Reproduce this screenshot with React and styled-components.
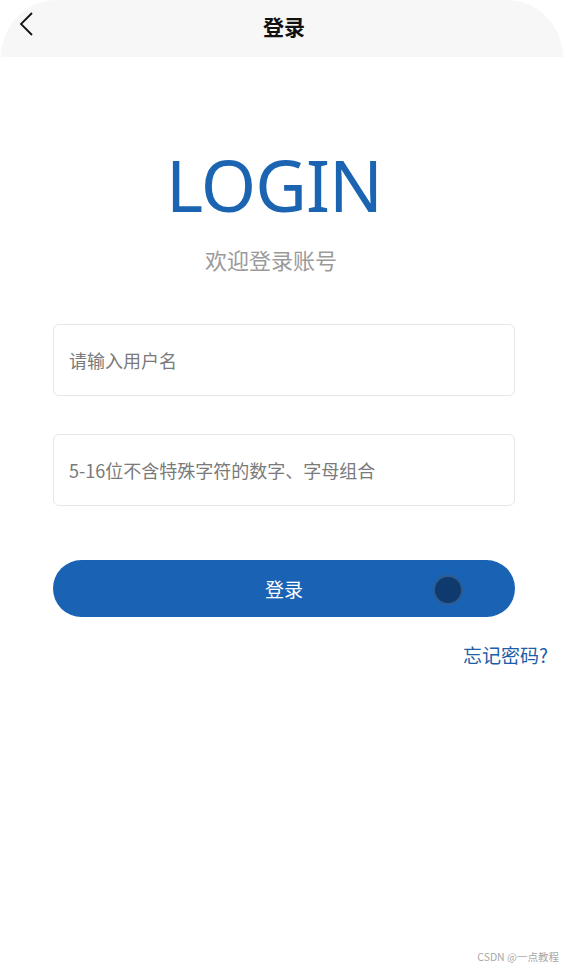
import React from 'react';
import styled, { createGlobalStyle } from 'styled-components';

const GlobalStyle = createGlobalStyle`
  html, body {
    margin: 0;
    padding: 0;
    background: #fff;
    font-family: "Noto Sans", "Noto Sans CJK SC", sans-serif;
  }
`;

const Page = styled.div`
  width: 564px;
  height: 968px;
  display: flex;
  flex-direction: column;
  background: #fff;
  overflow: hidden;
  position: relative;
`;

const Header = styled.div`
  height: 57px;
  margin: 0 1px;
  background: #f7f7f7;
  border-radius: 60px 60px 0 0;
  display: flex;
  align-items: center;
  justify-content: center;
  position: relative;
`;

const Back = styled.button`
  position: absolute;
  left: 14px;
  top: 10px;
  width: 22px;
  height: 28px;
  border: none;
  background: none;
  padding: 0;
  display: flex;
  align-items: center;
  justify-content: center;
`;

const Title = styled.h1`
  margin: 0;
  font-family: "Noto Sans CJK SC", sans-serif;
  font-size: 21px;
  font-weight: 700;
  color: #111;
  transform: translate(2px, -3px);
`;

const Hero = styled.div`
  display: flex;
  flex-direction: column;
  align-items: center;
  padding-top: 78px;
`;

const Logo = styled.div`
  font-family: "Noto Sans", sans-serif;
  font-size: 71px;
  line-height: 100px;
  letter-spacing: -1px;
  color: #1b64b1;
  transform: translateX(-8px);
`;

const Welcome = styled.div`
  margin-top: 9px;
  font-family: "Noto Sans CJK SC", sans-serif;
  font-size: 22px;
  line-height: 30px;
  color: #9a9a9a;
  transform: translateX(-11px);
`;

const Form = styled.form`
  display: flex;
  flex-direction: column;
  padding: 50px 49px 0 53px;
  gap: 38px;
`;

const Field = styled.input`
  box-sizing: border-box;
  width: 462px;
  height: 72px;
  border: 1px solid #e6e6e6;
  border-radius: 6px;
  padding: 0 15px;
  font-family: "Noto Sans CJK SC", sans-serif;
  font-size: 18px;
  color: #333;
  outline: none;
  &::placeholder {
    color: #7a7a7a;
  }
`;

const Submit = styled.button`
  box-sizing: border-box;
  margin-top: 16px;
  width: 462px;
  height: 57px;
  border: none;
  border-radius: 29px;
  background: #1a63b4;
  color: #fff;
  font-family: "Noto Sans CJK SC", sans-serif;
  font-size: 19px;
  position: relative;
  display: flex;
  align-items: center;
  justify-content: center;
`;

const Dot = styled.span`
  position: absolute;
  left: 380px;
  top: 15px;
  width: 26px;
  height: 26px;
  border-radius: 50%;
  background: #0f3a6d;
  border: 2px solid #2f5a8e;
`;

const Forgot = styled.a`
  align-self: flex-end;
  margin-top: -14px;
  margin-right: -33px;
  font-family: "Noto Sans CJK SC", sans-serif;
  font-size: 19px;
  color: #1d5ea8;
  text-decoration: none;
`;

const Mark = styled.div`
  position: absolute;
  right: 5px;
  bottom: 4px;
  font-family: "Noto Sans CJK SC", sans-serif;
  font-size: 10.5px;
  color: #a8a8a8;
`;

export default function App() {
  return (
    <Page>
      <GlobalStyle />
      <Header>
        <Back aria-label="返回">
          <svg width="16" height="26" viewBox="0 0 16 26">
            <path d="M14 2 L3 13 L14 24" fill="none" stroke="#111" strokeWidth="1.8" />
          </svg>
        </Back>
        <Title>登录</Title>
      </Header>
      <Hero>
        <Logo>LOGIN</Logo>
        <Welcome>欢迎登录账号</Welcome>
      </Hero>
      <Form onSubmit={(e) => e.preventDefault()}>
        <Field placeholder="请输入用户名" />
        <Field type="text" placeholder="5-16位不含特殊字符的数字、字母组合" />
        <Submit type="submit">
          登录
          <Dot />
        </Submit>
        <Forgot href="#">忘记密码?</Forgot>
      </Form>
      <Mark>CSDN @一点教程</Mark>
    </Page>
  );
}
